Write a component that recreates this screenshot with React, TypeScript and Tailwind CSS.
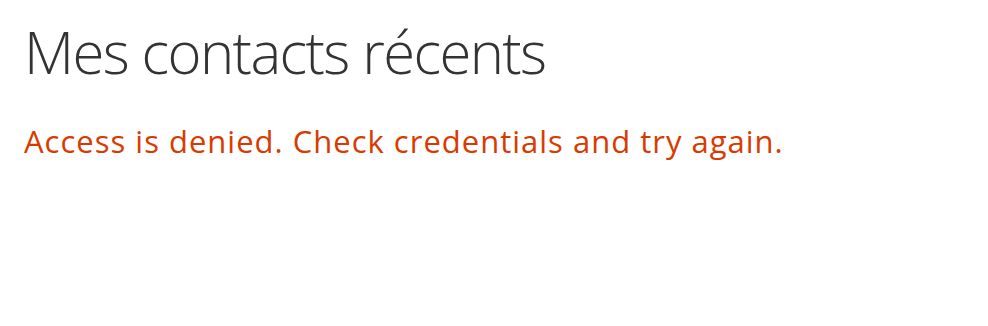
export default function App() {
  return (
    <div className="h-[326px] w-[988px] bg-white px-6 pt-4" style={{ fontFamily: '"Open Sans", "Noto Sans", sans-serif' }}>
      {/* Page title */}
      <h1 className="text-[58px] font-light leading-[72px] tracking-[-1.6px] text-[#333333]">Mes contacts récents</h1>

      {/* Error message */}
      <p className="mt-[35px] text-[31px] leading-[36px] tracking-[1px] text-[#d83b01]">
        Access is denied. Check credentials and try again.
      </p>
    </div>
  )
}
